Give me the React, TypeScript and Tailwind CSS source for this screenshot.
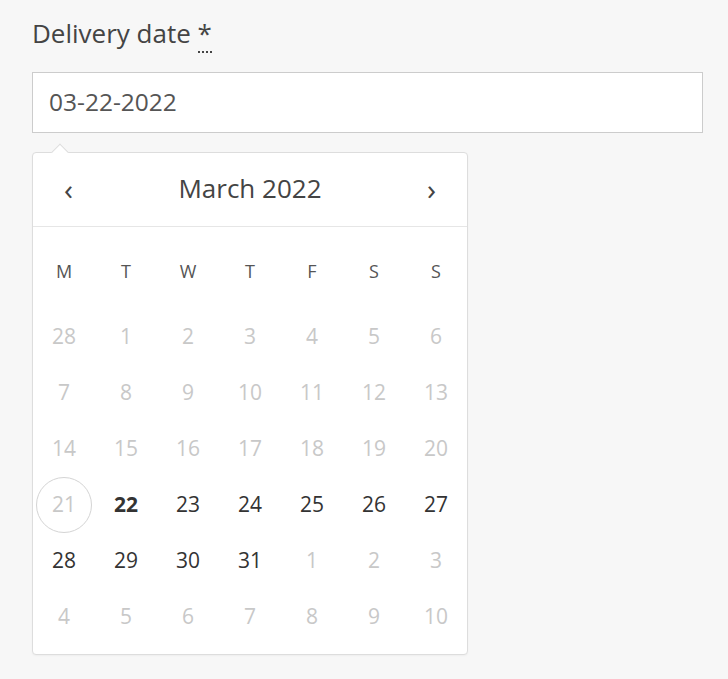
import React from 'react';

type Day = { n: number; muted?: boolean; today?: boolean; selected?: boolean };

const weekdays = ['M', 'T', 'W', 'T', 'F', 'S', 'S'];

const buildDays = (): Day[] => {
  const days: Day[] = [{ n: 28, muted: true }];
  for (let i = 1; i <= 20; i++) days.push({ n: i, muted: true });
  days.push({ n: 21, muted: true, today: true });
  days.push({ n: 22, selected: true });
  for (let i = 23; i <= 31; i++) days.push({ n: i });
  for (let i = 1; i <= 10; i++) days.push({ n: i, muted: true });
  return days;
};

const App: React.FC = () => {
  const days = buildDays();

  return (
    <div
      className="min-h-[679px] bg-[#f7f7f7] px-8 pt-[14px]"
      style={{ fontFamily: '"Open Sans", "Noto Sans", sans-serif' }}
    >
      <label className="block text-[26px] leading-[38px] text-[#444]">
        Delivery date{' '}
        <abbr title="required" className="no-underline border-b-2 border-dotted border-[#444] leading-none">
          *
        </abbr>
      </label>

      <div className="mt-[20px] flex h-[61px] w-[671px] items-center border border-[#cccccc] bg-white px-4 text-[24.5px] text-[#555]">
        03-22-2022
      </div>

      <div className="relative mt-[19px] w-[436px] rounded-[4px] border border-[#dddddd] bg-white shadow-[0_1px_2px_rgba(0,0,0,0.04)]">
        <div className="absolute -top-[7px] left-[21px] h-3 w-3 rotate-45 border-l border-t border-[#dddddd] bg-white" />

        <div className="flex h-[74px] items-center justify-between border-b border-[#e6e6e6] px-[31px] text-[#444]">
          <span className="-mt-[2px] text-[30px] leading-none">‹</span>
          <span className="-mt-[3px] text-[26px]">March 2022</span>
          <span className="-mt-[2px] text-[30px] leading-none">›</span>
        </div>

        <div className="pb-[9px] pt-[17px]">
          <div className="grid h-14 grid-cols-7 text-center text-[18px] text-[#555]">
            {weekdays.map((d, i) => (
              <div key={i} className="-mt-[2px] flex items-center justify-center">
                {d}
              </div>
            ))}
          </div>

          <div className="mt-[9px] grid grid-cols-7">
            {days.map((d, i) => (
              <div key={i} className="flex h-14 items-center justify-center">
                <span
                  className={
                    'flex h-14 w-14 items-center justify-center rounded-full text-[21px] ' +
                    (d.today ? 'border border-[#d4d4d4] ' : '') +
                    (d.selected ? 'font-bold text-[#333]' : d.muted ? 'text-[#c8c8c8]' : 'text-[#333]')
                  }
                >
                  {d.n}
                </span>
              </div>
            ))}
          </div>
        </div>
      </div>
    </div>
  );
};

export default App;
